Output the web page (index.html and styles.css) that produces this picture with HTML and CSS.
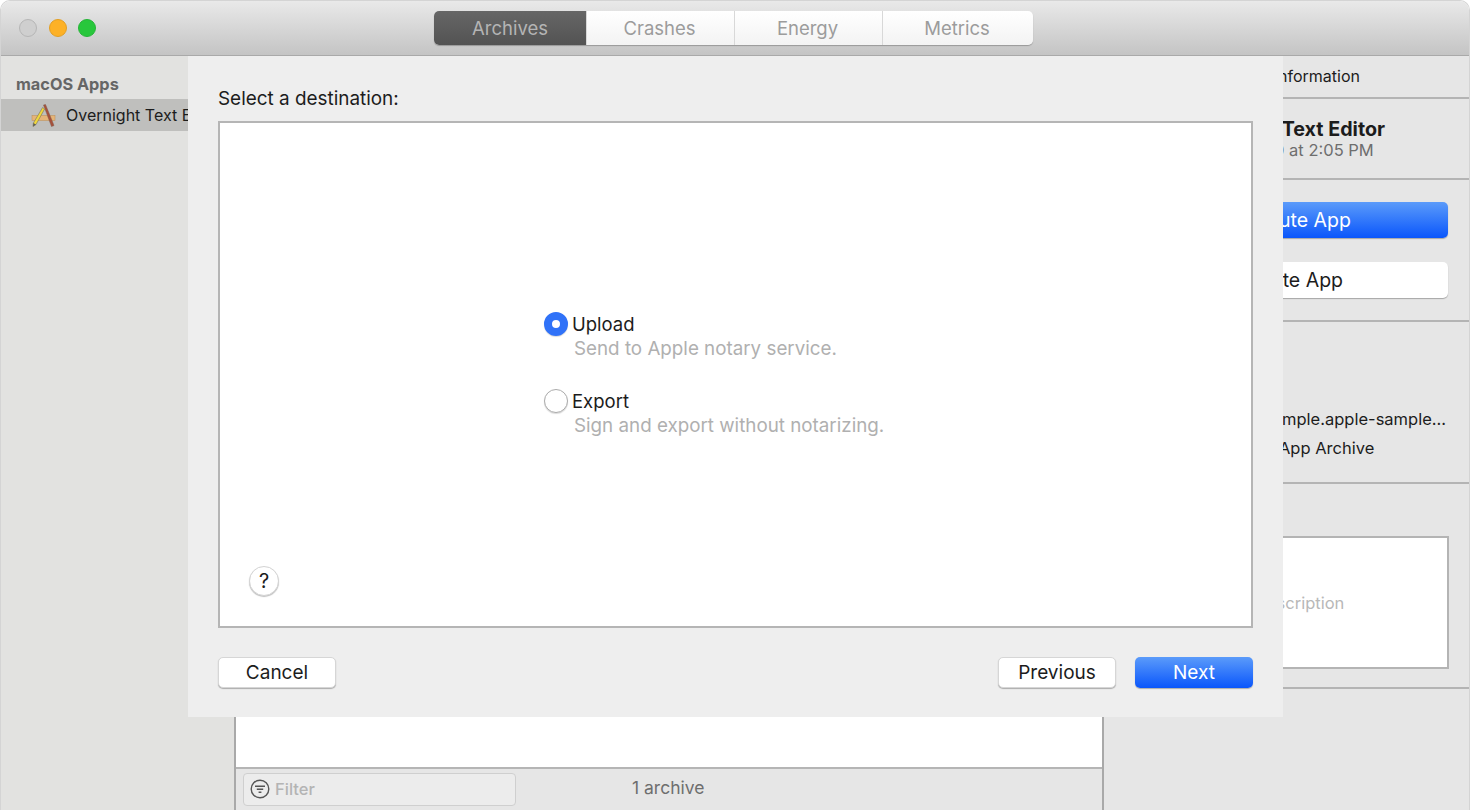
FILE: index.html
```html
<!DOCTYPE html>
<html lang="en">
<head>
    <meta charset="UTF-8">
    <meta name="viewport" content="width=device-width, initial-scale=1.0">
    <title>Archives</title>
    <link rel="stylesheet" href="styles.css">
</head>
<body>
    <div class="window">
        <div class="toolbar">
            <div class="lights">
                <span class="light grey"></span>
                <span class="light yellow"></span>
                <span class="light green"></span>
            </div>
            <div class="tabs">
                <div class="tab active">Archives</div>
                <div class="tab">Crashes</div>
                <div class="tab">Energy</div>
                <div class="tab">Metrics</div>
            </div>
        </div>

        <div class="content">
            <div class="sidebar">
                <div class="side-title">macOS Apps</div>
                <div class="side-row">
                    <svg class="app-icon" viewBox="0 0 26 26" width="26" height="26">
                        <rect x="2" y="13.5" width="23" height="5" fill="#e6b478" stroke="#bb8d55" stroke-width="0.5"/>
                        <path d="M13.5 3 L15.5 2.5 L24 23.5 L21.5 24.5 Z" fill="#a9503a" stroke="#7d5a4c" stroke-width="0.5"/>
                        <path d="M12.6 5.5 L14.6 7 L6 22.6 L3 24.5 L3.4 21 Z" fill="#f1d73c" stroke="#77725a" stroke-width="0.6"/>
                        <path d="M3 24.5 L3.4 21 L6 22.6 Z" fill="#5a5a5a"/>
                    </svg>
                    <span>Overnight Text Editor</span>
                </div>
            </div>

            <div class="archives">
                <div class="archive-list"></div>
                <div class="archive-bar">
                    <div class="filter">
                        <svg class="filter-icon" viewBox="0 0 20 20" width="20" height="20">
                            <circle cx="10" cy="10" r="8.8" fill="none" stroke="#555" stroke-width="1.4"/>
                            <path d="M5 7.2 H15 M6.8 10.2 H13.2 M8.6 13.2 H11.4" fill="none" stroke="#555" stroke-width="1.4"/>
                        </svg>
                        <span>Filter</span>
                    </div>
                    <div class="archive-count">1 archive</div>
                </div>
            </div>

            <div class="inspector">
                <div class="info-head">Archive Information</div>
                <div class="info-app">
                    <div class="app-name">Overnight Text Editor</div>
                    <div class="app-date">Jan 20, 2020 at 2:05 PM</div>
                </div>
                <div class="info-actions">
                    <div class="btn primary wide">Distribute App</div>
                    <div class="btn wide">Validate App</div>
                </div>
                <div class="info-details">
                    <div class="detail-one">com.example.apple-sample…</div>
                    <div class="detail-two">macOS App Archive</div>
                </div>
                <div class="info-desc">
                    <div class="desc-box">Description</div>
                </div>
            </div>
        </div>

        <div class="sheet">
            <div class="sheet-title">Select a destination:</div>
            <div class="dest-box">
                <div class="options">
                    <div class="option">
                        <div class="option-main"><span class="radio on"></span>Upload</div>
                        <div class="option-sub">Send to Apple notary service.</div>
                    </div>
                    <div class="option">
                        <div class="option-main"><span class="radio"></span>Export</div>
                        <div class="option-sub">Sign and export without notarizing.</div>
                    </div>
                </div>
                <div class="help">?</div>
            </div>
            <div class="sheet-buttons">
                <div class="btn">Cancel</div>
                <div class="right-buttons">
                    <div class="btn">Previous</div>
                    <div class="btn primary">Next</div>
                </div>
            </div>
        </div>
    </div>
</body>
</html>
```

FILE: styles.css
```css
* {
    box-sizing: border-box;
}
body {
    margin: 0;
    background: #ffffff;
    font-family: Inter, "Liberation Sans", sans-serif;
    color: #1c1c1c;
    overflow: hidden;
}
.window {
    position: relative;
    width: 1470px;
    height: 810px;
    border: 1px solid #d4d4d4;
    border-bottom: none;
    border-radius: 10px 10px 0 0;
    overflow: hidden;
    display: flex;
    flex-direction: column;
}

/* toolbar */
.toolbar {
    height: 55px;
    flex-shrink: 0;
    display: flex;
    align-items: center;
    padding-left: 18px;
    background: linear-gradient(#e9e9e9, #c4c4c4);
    border-bottom: 1px solid #a9a9a9;
}
.lights {
    display: flex;
    gap: 11.5px;
}
.light {
    width: 18px;
    height: 18px;
    border-radius: 50%;
}
.grey {
    background: #cfcfcf;
    border: 1px solid #b6b6b6;
}
.yellow {
    background: #fdb126;
    border: 1px solid #e39f22;
}
.green {
    background: #28c73c;
    border: 1px solid #25b537;
}
.tabs {
    display: flex;
    width: 599px;
    margin-left: 338px;
    height: 34px;
    border-radius: 5px;
    overflow: hidden;
    background: linear-gradient(#ffffff, #f3f3f3);
    box-shadow: 0 1px 1px rgba(0, 0, 0, 0.25);
}
.tab {
    width: 148px;
    display: flex;
    align-items: center;
    justify-content: center;
    padding-right: 2px;
    font-size: 18.5px;
    color: #9c9c9c;
    border-left: 1px solid #d8d8d8;
}
.tab:last-child {
    flex: 1;
}
.tab.active {
    width: 152px;
    padding-right: 0;
    border-left: none;
    color: #b4b4b4;
    background: linear-gradient(#666666, #535353);
}

/* main area behind the sheet */
.content {
    flex: 1;
    display: flex;
    min-height: 0;
}
.sidebar {
    width: 233px;
    background: #e2e2e0;
    padding-top: 17px;
}
.side-title {
    padding-left: 15px;
    font-size: 16.3px;
    font-weight: 700;
    color: #666666;
    line-height: 22px;
}
.side-row {
    margin-top: 4px;
    height: 32px;
    background: #bfbfbd;
    display: flex;
    align-items: center;
    gap: 10px;
    padding-left: 29px;
    font-size: 16px;
    white-space: nowrap;
}
.archives {
    width: 870px;
    display: flex;
    flex-direction: column;
    border-left: 2px solid #a9a9a9;
    border-right: 2px solid #a9a9a9;
}
.archive-list {
    flex: 1;
    background: #ffffff;
}
.archive-bar {
    height: 43px;
    border-top: 2px solid #b5b5b5;
    background: #e6e6e6;
    display: flex;
    align-items: center;
    padding-left: 7px;
}
.filter {
    width: 273px;
    height: 33px;
    display: flex;
    align-items: center;
    gap: 5px;
    padding: 0 0 1px 6px;
    border: 1px solid #cfcfcf;
    border-radius: 4px;
    background: #ececec;
    font-size: 16.5px;
    font-weight: 500;
    color: #b4b4b4;
}
.archive-count {
    margin-left: 116px;
    margin-bottom: 4px;
    font-size: 17.5px;
    color: #6e6e6e;
}
.inspector {
    flex: 1;
    background: #e6e6e6;
    display: flex;
    flex-direction: column;
    white-space: nowrap;
}
.inspector > div {
    border-bottom: 2px solid #b4b4b4;
}
.info-head {
    height: 43px;
    padding-left: 108px;
    line-height: 41px;
    font-size: 16px;
}
.info-app {
    height: 81px;
    padding: 18px 0 0 77px;
}
.app-name {
    font-size: 19.7px;
    font-weight: 700;
    line-height: 24px;
}
.app-date {
    font-size: 16.5px;
    line-height: 19px;
    color: #6e6e6e;
}
.info-actions {
    height: 142px;
    padding: 22px 21px 0 18px;
    display: flex;
    flex-direction: column;
    gap: 24px;
}
.info-details {
    height: 162px;
    padding: 86px 0 0 112px;
    font-size: 16.5px;
}
.detail-one {
    line-height: 22px;
}
.detail-two {
    margin-top: 7px;
    padding-left: 2px;
    line-height: 22px;
}
.info-desc {
    height: 205px;
    padding: 52px 20px 0 18px;
}
.desc-box {
    height: 133px;
    background: #ffffff;
    border: 2px solid #b4b4b4;
    display: flex;
    align-items: center;
    padding-left: 131px;
    font-size: 16.5px;
    color: #b8b8b8;
}

/* buttons */
.btn {
    width: 118px;
    height: 31px;
    display: flex;
    align-items: center;
    justify-content: center;
    border-radius: 5px;
    background: #ffffff;
    border: 1px solid #d6d6d6;
    box-shadow: 0 1px 1px rgba(0, 0, 0, 0.28);
    font-size: 19px;
}
.btn.primary {
    color: #ffffff;
    border: none;
    background: linear-gradient(#5b9bfa, #0a56fb);
}
.btn.wide {
    width: auto;
    height: 36px;
    border: none;
    font-size: 19.5px;
}

/* sheet */
.sheet {
    position: absolute;
    left: 187px;
    top: 55px;
    width: 1095px;
    height: 661px;
    background: #eeeeee;
    padding: 31px 30px 0;
    display: flex;
    flex-direction: column;
}
.sheet-title {
    font-size: 18.9px;
    line-height: 24px;
    height: 34px;
}
.dest-box {
    height: 507px;
    background: #ffffff;
    border: 2px solid #b5b5b5;
    display: grid;
}
.options,
.help {
    grid-area: 1 / 1;
}
.options {
    align-self: center;
    padding-left: 324px;
    display: flex;
    flex-direction: column;
    gap: 28px;
}
.option-main {
    display: flex;
    align-items: center;
    gap: 4px;
    font-size: 18.5px;
    line-height: 24px;
}
.option-sub {
    margin: 1px 0 0 30px;
    font-size: 18.8px;
    line-height: 24px;
    color: #b0b0b0;
    white-space: nowrap;
}
.radio {
    width: 24px;
    height: 24px;
    border-radius: 50%;
    border: 1px solid #ababab;
    background: #ffffff;
    box-shadow: 0 1px 1px rgba(0, 0, 0, 0.15);
}
.radio.on {
    border: 8px solid #3072f8;
}
.help {
    align-self: end;
    justify-self: start;
    margin: 0 0 30px 29px;
    width: 30px;
    height: 30px;
    border-radius: 50%;
    background: #ffffff;
    border: 1px solid #d4d4d4;
    box-shadow: 0 1px 1px rgba(0, 0, 0, 0.25);
    display: flex;
    align-items: center;
    justify-content: center;
    font-size: 20px;
}
.sheet-buttons {
    margin-top: 29px;
    display: flex;
    justify-content: space-between;
}
.right-buttons {
    display: flex;
    gap: 19px;
}
```
